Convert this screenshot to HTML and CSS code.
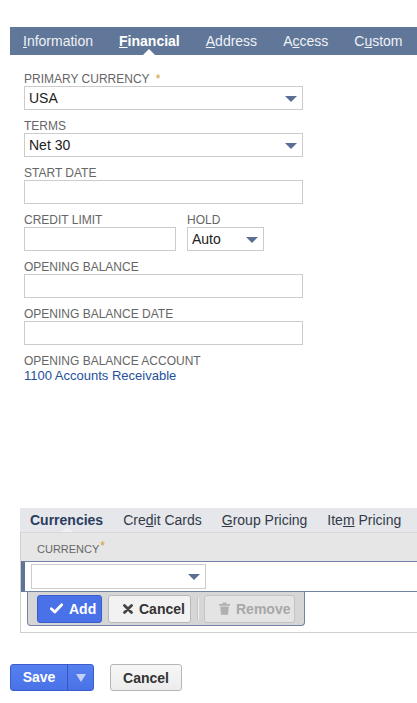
FILE: index.html
```html
<!DOCTYPE html>
<html>
<head>
<meta charset="utf-8">
<link rel="stylesheet" href="styles.css">
</head>
<body>
<nav class="tabs">
  <span class="tab"><u>I</u>nformation</span>
  <span class="tab active"><u>F</u>inancial</span>
  <span class="tab"><u>A</u>ddress</span>
  <span class="tab">A<u>c</u>cess</span>
  <span class="tab">C<u>u</u>stom</span>
</nav>

<div class="fields">
  <div class="field">
    <div class="label">PRIMARY CURRENCY <span class="req">*</span></div>
    <div class="box select wide"><span>USA</span><i class="caret"></i></div>
  </div>
  <div class="field">
    <div class="label">TERMS</div>
    <div class="box select wide"><span>Net 30</span><i class="caret"></i></div>
  </div>
  <div class="field">
    <div class="label">START DATE</div>
    <div class="box wide"></div>
  </div>
  <div class="field-row">
    <div class="field">
      <div class="label">CREDIT LIMIT</div>
      <div class="box credit"></div>
    </div>
    <div class="field">
      <div class="label">HOLD</div>
      <div class="box select hold"><span>Auto</span><i class="caret"></i></div>
    </div>
  </div>
  <div class="field">
    <div class="label">OPENING BALANCE</div>
    <div class="box wide"></div>
  </div>
  <div class="field">
    <div class="label">OPENING BALANCE DATE</div>
    <div class="box wide"></div>
  </div>
  <div class="field last">
    <div class="label">OPENING BALANCE ACCOUNT</div>
    <a class="link">1100 Accounts Receivable</a>
  </div>
</div>

<section class="sublist">
  <div class="subtabs">
    <span class="subtab active">Currencies</span>
    <span class="subtab">Cre<u>d</u>it Cards</span>
    <span class="subtab"><u>G</u>roup Pricing</span>
    <span class="subtab">Ite<u>m</u> Pricing</span>
  </div>
  <div class="subbody">
    <div class="colhead">CURRENCY<span class="req sup">*</span></div>
    <div class="editrow">
      <div class="box select small"><i class="caret"></i></div>
    </div>
    <div class="rowbtns">
      <button class="btn primary"><svg width="13" height="11" viewBox="0 0 13 11"><path d="M1.3 5.8 L4.8 9 L11.7 1.8" fill="none" stroke="#fff" stroke-width="2.8" stroke-linecap="round" stroke-linejoin="round"/></svg>Add</button>
      <button class="btn"><svg width="10" height="10" viewBox="0 0 10 10"><path d="M1.5 1.5 L8.5 8.5 M8.5 1.5 L1.5 8.5" stroke="#444" stroke-width="2.8" stroke-linecap="round"/></svg>Cancel</button>
      <span class="sep"></span>
      <button class="btn disabled"><svg width="11" height="13" viewBox="0 0 11 13"><path d="M3.5 0.5 h4 v1.5 h3.5 v1.8 h-11 v-1.8 h3.5 z" fill="#b0b0b0"/><path d="M1.2 4.5 h8.6 l-0.8 8.3 h-7 z" fill="#b0b0b0"/></svg>Remove</button>
    </div>
  </div>
</section>

<div class="actions">
  <div class="save">
    <span class="save-main">Save</span>
    <span class="save-more"><i class="save-caret"></i></span>
  </div>
  <button class="cancel">Cancel</button>
</div>
</body>
</html>
```

FILE: styles.css
```css
* { box-sizing: border-box; }
html, body { margin: 0; padding: 0; }
body {
  font-family: "Liberation Sans", Arial, sans-serif;
  color: #222;
  background: #fff;
  overflow: hidden;
  width: 417px;
}
u { text-decoration: underline; text-underline-offset: 1px; }

.tabs {
  margin: 27px 0 0 10px;
  height: 28px;
  background: #607799;
  display: flex;
  align-items: center;
  white-space: nowrap;
}
.tab {
  position: relative;
  padding: 0 13px;
  font-size: 14px;
  line-height: 28px;
  color: #eef1f6;
}
.tab.active { font-weight: bold; color: #fff; }
.tab.active::after {
  content: "";
  position: absolute;
  left: 50%;
  bottom: 0;
  margin-left: -6px;
  border-left: 6px solid transparent;
  border-right: 6px solid transparent;
  border-bottom: 6px solid #fff;
}

.fields { padding: 17px 0 0 24px; }
.field { margin-bottom: 9px; }
.field.last { margin-bottom: 0; }
.field-row { display: flex; gap: 11px; }
.label {
  font-size: 12px;
  line-height: 14px;
  color: #666;
  white-space: nowrap;
}
.req { color: #d49a2e; margin-left: 3px; }
.box {
  height: 24px;
  border: 1px solid #ccc;
  background: #fff;
  font-size: 14px;
  line-height: 22px;
  padding-left: 4px;
  color: #222;
}
.wide { width: 279px; }
.credit { width: 152px; }
.hold { width: 77px; }
.select { display: flex; align-items: center; padding-right: 5px; }
.caret {
  margin-left: auto;
  width: 0; height: 0;
  border-left: 6px solid transparent;
  border-right: 6px solid transparent;
  border-top: 6px solid #5b6f96;
  margin-top: 1px;
}
.link {
  display: block;
  font-size: 13px;
  line-height: 15px;
  color: #24519a;
}

.sublist {
  margin: 125px 0 0 20px;
}
.subtabs {
  height: 24px;
  background: #e5e7eb;
  display: flex;
  align-items: center;
  white-space: nowrap;
}
.subtab {
  position: relative;
  padding: 0 10px;
  font-size: 14px;
  line-height: 24px;
  color: #333a47;
}
.subtab.active { font-weight: bold; color: #2b3c5e; }
.subtab.active::after {
  content: "";
  position: absolute;
  left: 50%;
  bottom: 0;
  margin-left: -6px;
  border-left: 6px solid transparent;
  border-right: 6px solid transparent;
  border-bottom: 5px solid #f1f1f1;
}
.subbody {
  border-left: 1px solid #cfcfcf;
  border-bottom: 1px solid #cfcfcf;
  padding-bottom: 6px;
}
.colhead {
  height: 29px;
  background: #e6e6e6;
  border-top: 1px solid #d8d8d8;
  font-size: 11px;
  line-height: 13px;
  padding: 10px 0 0 16px;
  color: #666;
}
.req.sup { margin-left: 1px; font-size: 12px; vertical-align: 3px; line-height: 0; }
.editrow {
  height: 31px;
  border-top: 1px solid #7283a5;
  border-bottom: 1px solid #7283a5;
  border-left: 4px solid #5f7399;
  padding: 2px 0 0 6px;
  background: #fff;
}
.small { width: 175px; height: 25px; }
.rowbtns {
  margin-left: 6px;
  width: 278px;
  height: 34px;
  background: #d6d6d6;
  border: 1px solid #7283a5;
  border-top: none;
  border-radius: 0 0 4px 4px;
  display: flex;
  align-items: center;
  padding: 0 0 0 9px;
}
.btn {
  height: 28px;
  border: 1px solid #b8b8b8;
  border-radius: 3px;
  background: #f2f2f2;
  font-family: "Liberation Sans", Arial, sans-serif;
  font-weight: bold;
  font-size: 14px;
  color: #333;
  display: flex;
  align-items: center;
  gap: 6px;
  margin: 0 6px 0 0;
  padding: 0 0 0 14px;
  width: 83px;
}
.btn.primary {
  width: 65px;
  background: #4a72e8;
  border-color: #3a5ccc;
  color: #fff;
  padding-left: 12px;
}
.btn.disabled {
  width: 91px;
  background: #e4e4e4;
  border-color: #c4c4c4;
  color: #a8a8a8;
  padding-left: 14px;
}
.sep {
  width: 2px;
  height: 22px;
  background: #efefef;
  border-left: 1px solid #c4c4c4;
  margin: 0 5px 0 0;
}

.actions {
  margin: 31px 0 0 10px;
  display: flex;
  gap: 16px;
}
.save {
  display: flex;
  height: 27px;
  width: 84px;
  border: 1px solid #3a5ccc;
  border-radius: 3px;
  background: linear-gradient(#5580ee, #4a72e8);
  color: #fff;
  font-weight: bold;
  font-size: 14px;
}
.save-main {
  width: 57px;
  text-align: center;
  line-height: 25px;
  border-right: 1px solid #3556bd;
}
.save-more {
  flex: 1;
  display: flex;
  align-items: center;
  justify-content: center;
}
.save-caret {
  width: 0; height: 0;
  border-left: 5px solid transparent;
  border-right: 5px solid transparent;
  border-top: 8px solid #c5d1f4;
}
.cancel {
  height: 27px;
  width: 72px;
  border: 1px solid #b5b5b5;
  border-radius: 3px;
  background: linear-gradient(#f7f7f7, #ececec);
  font-family: "Liberation Sans", Arial, sans-serif;
  font-weight: bold;
  font-size: 14px;
  color: #333;
  padding: 0;
}
```
